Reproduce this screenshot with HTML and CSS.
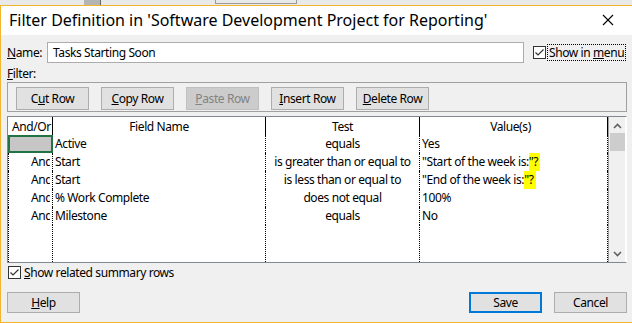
FILE: index.html
```html
<!DOCTYPE html>
<html lang="en">
<head>
    <meta charset="UTF-8">
    <title>Filter Definition</title>
    <link rel="stylesheet" href="styles.css">
</head>
<body>
<div class="desk">
    <span class="seg s1"></span>
    <span class="seg s2"></span>
    <span class="seg s3"></span>
    <span class="seg s4"></span>
</div>
<div class="window">
    <div class="titlebar">
        <span class="title">Filter Definition in 'Software Development Project for Reporting'</span>
        <svg class="close" width="12" height="12" viewBox="0 0 12 12">
            <path d="M1 1 L11 11 M11 1 L1 11" stroke="#000" stroke-width="1.1" fill="none"/>
        </svg>
    </div>
    <div class="dialog">
        <div class="namerow">
            <label class="lbl name-lbl"><u>N</u>ame:</label>
            <div class="textbox">Tasks Starting Soon</div>
            <span class="check">
                <svg width="13" height="13" viewBox="0 0 13 13"><rect x="0.5" y="0.5" width="12" height="12" fill="#fff" stroke="#333"/><path d="M2.5 6.5 L5 9 L10.5 3.5" stroke="#333" stroke-width="1.2" fill="none"/></svg>
            </span>
            <span class="focus">Show in <u>m</u>enu</span>
        </div>
        <div class="lbl filter-lbl"><u>F</u>ilter:</div>
        <div class="toolbar">
            <button class="btn">C<u>u</u>t Row</button>
            <button class="btn"><u>C</u>opy Row</button>
            <button class="btn disabled"><u>P</u>aste Row</button>
            <button class="btn"><u>I</u>nsert Row</button>
            <button class="btn"><u>D</u>elete Row</button>
        </div>
        <div class="grid">
            <div class="table">
                <div class="row head">
                    <div class="c c1">And/Or</div>
                    <div class="c c2">Field Name</div>
                    <div class="c c3">Test</div>
                    <div class="c c4">Value(s)</div>
                </div>
                <div class="row">
                    <div class="c c1 selected"></div>
                    <div class="c c2">Active</div>
                    <div class="c c3">equals</div>
                    <div class="c c4">Yes</div>
                </div>
                <div class="row">
                    <div class="c c1"><span class="clip">And</span></div>
                    <div class="c c2">Start</div>
                    <div class="c c3">is greater than or equal to</div>
                    <div class="c c4">"Start of the week is:<span class="mark">"?</span></div>
                </div>
                <div class="row">
                    <div class="c c1"><span class="clip">And</span></div>
                    <div class="c c2">Start</div>
                    <div class="c c3">is less than or equal to</div>
                    <div class="c c4">"End of the week is:<span class="mark">"?</span></div>
                </div>
                <div class="row">
                    <div class="c c1"><span class="clip">And</span></div>
                    <div class="c c2">% Work Complete</div>
                    <div class="c c3">does not equal</div>
                    <div class="c c4">100%</div>
                </div>
                <div class="row">
                    <div class="c c1"><span class="clip">And</span></div>
                    <div class="c c2">Milestone</div>
                    <div class="c c3">equals</div>
                    <div class="c c4">No</div>
                </div>
                <div class="row filler">
                    <div class="c c1"></div>
                    <div class="c c2"></div>
                    <div class="c c3"></div>
                    <div class="c c4"></div>
                </div>
            </div>
            <div class="scrollbar">
                <svg class="arrow" width="9" height="6" viewBox="0 0 9 6"><path d="M1 5 L4.5 1.5 L8 5" stroke="#606060" stroke-width="1.6" fill="none"/></svg>
                <div class="thumb"></div>
                <div class="track"></div>
                <svg class="arrow" width="9" height="6" viewBox="0 0 9 6"><path d="M1 1 L4.5 4.5 L8 1" stroke="#606060" stroke-width="1.6" fill="none"/></svg>
            </div>
        </div>
        <div class="summary">
            <span class="check">
                <svg width="13" height="13" viewBox="0 0 13 13"><rect x="0.5" y="0.5" width="12" height="12" fill="#fff" stroke="#333"/><path d="M2.5 6.5 L5 9 L10.5 3.5" stroke="#333" stroke-width="1.2" fill="none"/></svg>
            </span>
            <span><u>S</u>how related summary rows</span>
        </div>
        <div class="footer">
            <button class="btn"><u>H</u>elp</button>
            <span class="spacer"></span>
            <button class="btn default">Save</button>
            <button class="btn">Cancel</button>
        </div>
    </div>
</div>
</body>
</html>
```

FILE: styles.css
```css
html, body {
    margin: 0;
    padding: 0;
}
body {
    width: 632px;
    height: 323px;
    overflow: hidden;
    background: #f0f0f0;
    font-family: "Noto Sans", "Open Sans", sans-serif;
    font-size: 12px;
    letter-spacing: -0.4px;
    color: #000;
}
u {
    text-decoration: underline;
    text-underline-offset: 1px;
}
.desk {
    height: 5px;
    display: flex;
    background: #e9e9e9;
}
.seg {
    display: block;
    height: 5px;
}
.s1 { width: 84px; }
.s2 { width: 16px; background: #b4b4b4; }
.s3 { width: 14px; border-left: 1px solid #666; }
.s4 { width: 80px; border: 1px solid #999; border-top: none; margin-left: 100px; height: 3px; }
.window {
    height: 316px;
    border-top: 1px solid #f3b52c;
    border-left: 1px solid #f3b52c;
    border-bottom: 1px solid #f3b52c;
    display: flex;
    flex-direction: column;
}
.titlebar {
    height: 29px;
    flex: none;
    background: #fff;
    display: flex;
    align-items: center;
    padding: 0 18px 0 8px;
}
.title {
    flex: 1;
    font-size: 16px;
    letter-spacing: 0;
    padding-bottom: 1px;
    white-space: nowrap;
}
.close {
    display: block;
    margin-top: -1px;
}
.dialog {
    flex: 1;
    padding: 0 5px 0 6px;
    display: flex;
    flex-direction: column;
}
.namerow {
    margin-top: 7px;
    height: 21px;
    flex: none;
    display: flex;
    align-items: center;
    white-space: nowrap;
}
.name-lbl {
    width: 40px;
}
.textbox {
    width: 470px;
    height: 19px;
    line-height: 19px;
    background: #fff;
    border: 1px solid #acacac;
    padding-left: 5px;
}
.check {
    display: inline-flex;
    flex: none;
    width: 13px;
    height: 13px;
    margin-left: 9px;
}
.check svg {
    display: block;
}
.focus {
    margin-left: 2px;
    padding: 0 1px;
    line-height: 15px;
    outline: 1px dotted #000;
    outline-offset: 0;
}
.filter-lbl {
    margin-top: 2px;
    line-height: 17px;
}
.toolbar {
    flex: none;
    height: 24px;
    border: 1px solid #a0a0a0;
    display: flex;
    align-items: flex-start;
    gap: 12px;
    padding: 4px 0 0 8px;
}
.btn {
    font: inherit;
    letter-spacing: -0.4px;
    color: #000;
    width: 73px;
    height: 23px;
    padding: 0;
    background: #e1e1e1;
    border: 1px solid #adadad;
    border-radius: 0;
}
.btn.disabled {
    background: #cccccc;
    border-color: #bfbfbf;
    color: #838383;
}
.grid {
    flex: none;
    margin-top: 4px;
    height: 145px;
    border: 1px solid #828790;
    border-right: 1px solid #fff;
    display: flex;
    background: #fff;
}
.table {
    width: 600px;
    display: flex;
    flex-direction: column;
}
.row {
    display: flex;
    height: 18px;
    line-height: 18px;
}
.row.filler {
    flex: 1;
}
.c {
    box-sizing: border-box;
    border-right: 1px dotted #000;
    white-space: nowrap;
    overflow: hidden;
    padding: 0 2px;
}
.head .c {
    border-right: 1px solid #000;
    text-align: center;
    padding-top: 1px;
}
.c1 { width: 45px; border-left: 1px dotted #000; text-align: right; }
.head .c1 { border-left: none; padding-left: 4px; text-align: left; }
.c2 { width: 213px; }
.c3 { width: 154px; text-align: center; }
.c4 { width: 188px; }
.head .c4 { padding-right: 8px; }
.clip {
    display: inline-block;
    width: 19px;
    overflow: hidden;
    vertical-align: top;
}
.c1.selected {
    background: #c6c6c6;
    border: 2px solid #217346;
}
.mark {
    background: #ffff00;
    padding: 2px 2px 1px 0;
}
.scrollbar {
    width: 16px;
    background: #f0f0f0;
    border-left: 1px solid #a0a0a0;
    display: flex;
    flex-direction: column;
    align-items: center;
}
.arrow {
    display: block;
    margin: 6px 0 5px;
}
.thumb {
    width: 15px;
    height: 18px;
    background: #cdcdcd;
    margin-top: -1px;
}
.track {
    flex: 1;
}
.summary {
    flex: none;
    height: 18px;
    display: flex;
    align-items: center;
}
.summary .check {
    margin: 0 3px 0 1px;
}
.footer {
    margin-top: 11px;
    display: flex;
    align-items: flex-start;
    gap: 12px;
}
.footer .btn {
    height: 21px;
}
.spacer {
    flex: 1;
}
.btn.default {
    border: 2px solid #0078d7;
}
```
